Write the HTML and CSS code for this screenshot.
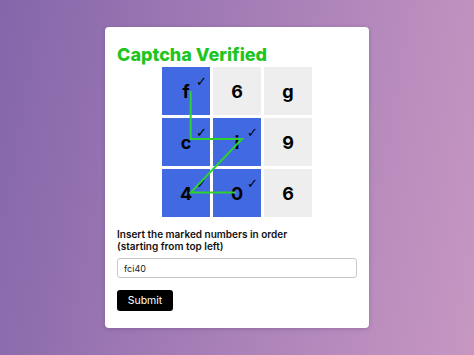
FILE: index.html
```html
<!DOCTYPE html>
<html lang="en">
<head>
<meta charset="utf-8">
<title>Captcha Verified</title>
<link rel="stylesheet" href="styles.css">
</head>
<body>
<main class="page">
  <section class="card">
    <h1 class="title">Captcha Verified</h1>
    <div class="board">
      <div class="grid">
        <div class="cell marked">f</div>
        <div class="cell">6</div>
        <div class="cell">g</div>
        <div class="cell marked">c</div>
        <div class="cell marked">i</div>
        <div class="cell">9</div>
        <div class="cell marked">4</div>
        <div class="cell marked">0</div>
        <div class="cell">6</div>
      </div>
      <svg class="path" width="150" height="150" viewBox="0 0 150 150">
        <polyline points="28.7,24 28.7,72 80,72 28.7,125.5 74,125.5" fill="none" stroke="#2ed12e" stroke-width="2"/>
      </svg>
    </div>
    <label class="label" for="answer">Insert the marked numbers in order<br>(starting from top left)</label>
    <input class="input" id="answer" type="text" value="fci40">
    <button class="btn" type="button">Submit</button>
  </section>
</main>
</body>
</html>
```

FILE: styles.css
```css
html, body {
  margin: 0;
  padding: 0;
}
body {
  width: 474px;
  height: 355px;
  overflow: hidden;
  background: linear-gradient(100deg, #8466aa 0%, #a77fb7 50%, #c797c2 100%);
  font-family: Inter, "Noto Sans", sans-serif;
}
.page {
  padding: 27px 0 0 105px;
}
.card {
  width: 264px;
  height: 301px;
  box-sizing: border-box;
  background: #fff;
  border-radius: 4px;
  box-shadow: 0 1px 4px rgba(60, 30, 90, 0.25);
  padding: 16px 12px 0 12px;
  display: flex;
  flex-direction: column;
  align-items: flex-start;
}
.title {
  margin: 0;
  font-size: 18px;
  line-height: 24px;
  font-weight: 800;
  color: #1ec51e;
}
.board {
  position: relative;
  align-self: center;
  width: 150px;
  height: 150px;
}
.grid {
  display: grid;
  grid-template-columns: repeat(3, 48px);
  grid-template-rows: repeat(3, 48px);
  gap: 3px;
}
.cell {
  position: relative;
  background: #eeeeee;
  display: flex;
  align-items: center;
  justify-content: center;
  font-size: 18px;
  font-weight: 700;
  color: #000;
}
.cell.marked {
  background: #4169e1;
}
.cell.marked::after {
  content: "\2713";
  position: absolute;
  top: 8px;
  right: 3px;
  font-family: "DejaVu Sans", sans-serif;
  font-size: 13px;
  font-weight: 700;
  line-height: 1;
}
.path {
  position: absolute;
  left: 0;
  top: 0;
}
.label {
  margin-top: 11px;
  font-size: 10px;
  line-height: 12px;
  font-weight: 600;
  color: #111;
}
.input {
  margin-top: 6px;
  width: 240px;
  height: 20px;
  box-sizing: border-box;
  border: 1px solid #c8c8c8;
  border-radius: 3px;
  padding: 0 6px;
  font-family: inherit;
  font-size: 9px;
  color: #222;
}
.btn {
  margin-top: 12px;
  width: 56px;
  height: 21px;
  border: none;
  border-radius: 3px;
  background: #000;
  color: #fff;
  font-family: inherit;
  font-size: 10.5px;
  padding: 0;
}
```
